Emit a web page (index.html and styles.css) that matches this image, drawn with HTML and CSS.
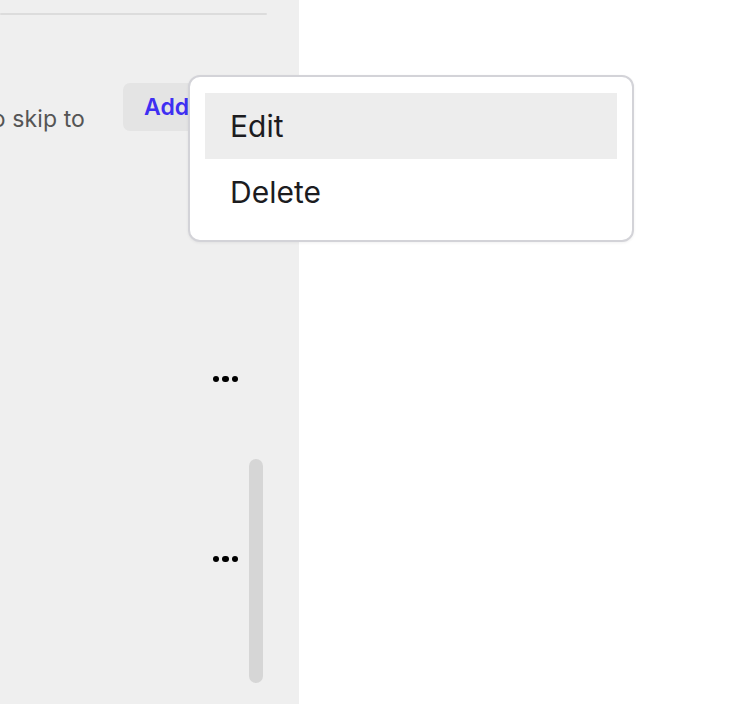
FILE: index.html
```html
<!DOCTYPE html>
<html lang="en">
<head>
<meta charset="utf-8">
<title>Menu</title>
<link rel="stylesheet" href="styles.css">
</head>
<body>
<div class="page">
  <aside class="panel">
    <div class="divider"></div>
    <div class="row">
      <div class="hint-box"><span class="hint">Tap to skip to</span></div>
      <button class="add-btn">Add step</button>
    </div>
    <div class="list">
      <div class="item"><span class="dots"><i></i><i></i><i></i></span></div>
      <div class="item"><span class="dots"><i></i><i></i><i></i></span></div>
    </div>
    <div class="scrollbar"></div>
  </aside>
  <main class="main"></main>
  <div class="menu">
    <div class="menu-item active">Edit</div>
    <div class="menu-item">Delete</div>
  </div>
</div>
</body>
</html>
```
FILE: styles.css
```css
* { box-sizing: border-box; }
html, body { margin: 0; padding: 0; }
body {
  font-family: Inter, "Noto Sans", "Liberation Sans", sans-serif;
  background: #ffffff;
  width: 746px;
  height: 704px;
  overflow: hidden;
}
.page {
  position: relative;
  display: flex;
  width: 746px;
  height: 704px;
}
.panel {
  position: relative;
  width: 299px;
  height: 704px;
  background: #efefef;
  overflow: hidden;
  flex: none;
}
.main { flex: 1; background: #fff; }
.divider {
  margin-top: 13px;
  width: 267px;
  height: 2px;
  border-radius: 1px;
  background: #dcdcdc;
}
.row {
  display: flex;
  align-items: flex-start;
  margin-top: 68px;
  height: 48px;
}
.hint-box {
  width: 85px;
  display: flex;
  justify-content: flex-end;
  margin-top: 21px;
  flex: none;
}
.hint {
  white-space: nowrap;
  font-size: 23px;
  line-height: 30px;
  color: #555555;
  letter-spacing: 0.1px;
}
.add-btn {
  margin-left: 38px;
  height: 48px;
  padding: 0 21px;
  border: none;
  border-radius: 7px;
  background: #e4e4e4;
  color: #3f2ff2;
  font-family: Inter, "Noto Sans", "Liberation Sans", sans-serif;
  font-size: 23px;
  font-weight: 600;
  white-space: nowrap;
  flex: none;
}
.list { margin-top: 158px; }
.item {
  height: 180px;
  display: flex;
  justify-content: flex-end;
  align-items: center;
  padding-right: 61px;
}
.dots { display: flex; gap: 3px; }
.dots i {
  display: block;
  width: 6.5px;
  height: 6.5px;
  border-radius: 50%;
  background: #000;
}
.scrollbar {
  position: absolute;
  left: 249px;
  top: 459px;
  width: 14px;
  height: 224px;
  border-radius: 7px;
  background: #d6d6d6;
}
.menu {
  position: absolute;
  left: 188px;
  top: 75px;
  width: 446px;
  height: 167px;
  background: #fff;
  border: 2px solid #d3d3d8;
  border-radius: 12px;
  padding: 16px 15px 15px;
  box-shadow: 0 1px 3px rgba(0, 0, 0, 0.06);
}
.menu-item {
  height: 66px;
  display: flex;
  align-items: center;
  padding-left: 25px;
  font-size: 30px;
  color: #1c1c1f;
}
.menu-item.active { background: #ededed; }
```
